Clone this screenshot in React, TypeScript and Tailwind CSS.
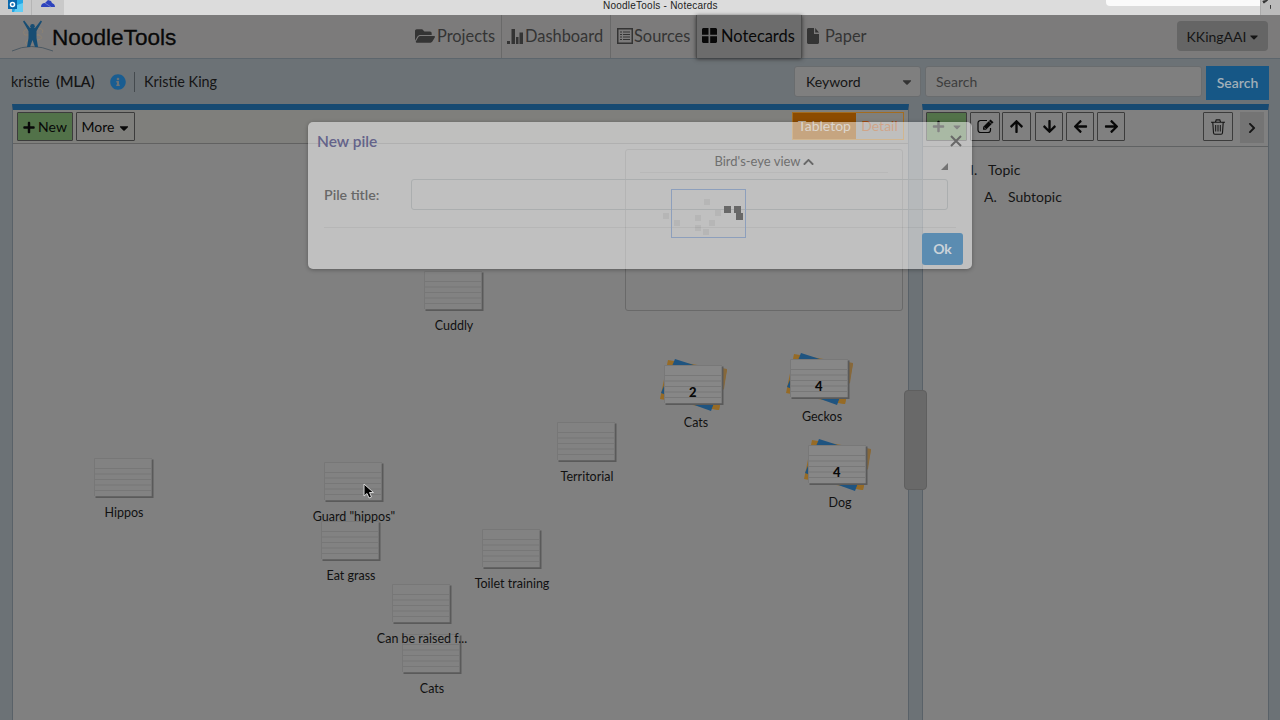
import React from "react";
import {
  FaArrowDown,
  FaArrowLeft,
  FaArrowRight,
  FaArrowUp,
  FaCaretDown,
  FaChevronRight,
  FaChevronUp,
  FaFolderOpen,
  FaInfoCircle,
  FaPlus,
} from "react-icons/fa";

type CardItem = { title: string; x: number; y: number; count?: number };

const cards: CardItem[] = [
  { title: "Cuddly", x: 424, y: 272 },
  { title: "Territorial", x: 557, y: 423 },
  { title: "Hippos", x: 94, y: 459 },
  { title: 'Guard "hippos"', x: 324, y: 463 },
  { title: "Eat grass", x: 321, y: 522 },
  { title: "Toilet training", x: 482, y: 530 },
  { title: "Can be raised f...", x: 392, y: 585 },
  { title: "Cats", x: 402, y: 635 },
];

const piles: CardItem[] = [
  { title: "Cats", x: 664, y: 366, count: 2 },
  { title: "Geckos", x: 790, y: 360, count: 4 },
  { title: "Dog", x: 808, y: 446, count: 4 },
];

const mapDots = [
  [704, 199], [663, 213], [674, 220], [695, 215], [695, 225], [715, 210], [709, 220], [703, 229],
];

function Logo() {
  return (
    <svg viewBox="0 0 44 34" className="h-[34px] w-[44px] shrink-0" fill="none">
      <path d="M1 31Q20 22 42 31" stroke="#4c5963" strokeWidth="1" />
      <path d="M17 9q-7 2-3 6h14q6 3-1 5H17q-6 3 1 6M27 8q7 1 4 5M28 15h-8" stroke="#8f8270" strokeWidth=".9" />
      <circle cx="21.500" cy="6.200" r="2.300" fill="#174d73" />
      <path d="M12 1.500l1.200-1L19 8h5l5.800-7.500 1.200 1L25.500 11v7l1.500 9h-3l-2.500-7-2.500 7h-3l1.500-9v-7z" fill="#174d73" />
    </svg>
  );
}

function BarsIcon() {
  return (
    <svg viewBox="0 0 16 16" className="h-4 w-4" fill="currentColor">
      <path d="M0 13h3v3H0zM4.500 1h3.500v15H4.500zM9 9h2.500v7H9zM12.500 4.500H16V16h-3.500z" />
    </svg>
  );
}

function ListIcon() {
  return (
    <svg viewBox="0 0 16 16" className="h-4 w-4" fill="none" stroke="currentColor">
      <path d="M.75.75h14.5v14.5H.75z" strokeWidth="1.5" />
      <path d="M3 4h2M6 4h7M3 6.5h2M6 6.5h7M3 9h2M6 9h7M3 11.5h2M6 11.5h7" />
    </svg>
  );
}

function GridIcon() {
  return (
    <svg viewBox="0 0 15 15" className="h-[15px] w-[15px]" fill="currentColor">
      <path d="M1 0h5.5v6.7H0V1zM8.2 0H14l1 1v5.7H8.2zM0 8.3h6.5V15H1l-1-1zM8.2 8.3H15V14l-1 1H8.2z" />
    </svg>
  );
}

function FileIcon() {
  return (
    <svg viewBox="0 0 12 16" className="h-4 w-3" fill="currentColor">
      <path d="M1 0h6v6h5v9l-1 1H1l-1-1V1zM8.2 0L12 4.4H8.2z" />
    </svg>
  );
}

function EditIcon() {
  return (
    <svg viewBox="0 0 17 15" className="h-[15px] w-[17px]" fill="none" stroke="#080808">
      <path d="M10 1.5H3.5a2.5 2.5 0 0 0-2.5 2.5v7a2.5 2.5 0 0 0 2.500 2.500H11a2.500 2.500 0 0 0 2.500-2.500V9" strokeWidth="1.2" />
      <path d="M6 10.800V8l7.500-7.500 3 2.800L9 10.800z" fill="#080808" stroke="none" />
      <path d="M7 8.300L8.600 10M12 2.300l2.500 2.500" stroke="#808080" strokeWidth=".7" />
    </svg>
  );
}

function TrashIcon() {
  return (
    <svg viewBox="0 0 14 16" className="h-4 w-[14px]" fill="none" stroke="#141414">
      <path d="M0 3.300h14M4.500 3L5.200.9h3.600L9.500 3M1.800 3.500l.7 10.300q.1 1.400 1.400 1.400h6.200q1.300 0 1.400-1.400l.7-10.300" strokeWidth="1.1" />
      <path d="M4.700 6v6.500M7 6v6.500M9.300 6v6.500" />
    </svg>
  );
}

function CardFace({ stacked }: { stacked?: boolean }) {
  return (
    <svg viewBox="0 0 72 56" className="absolute -left-1.5 -top-[9px] h-14 w-[72px]" fill="none">
      {stacked && (
        <>
          <path d="M10 3l59 10-8 40-59-11z" fill="#966b26" />
          <path d="M17 2l50 16-14 36-50-18z" fill="#1f5480" />
          <path d="M64 11l5 1-3 20-2 1z" fill="#86683b" />
          <path d="M56 47h6l-1 6-7-1z" fill="#966b26" />
        </>
      )}
      <path d="M7.500 9.500H65.500V48H7.500z" fill="#5a5a5a" />
      <path d="M6 8h57.700v38.300H6z" fill={stacked ? "#878787" : "#828282"} />
      <path d="M6.500 46V8.500H64" stroke="#757575" strokeWidth=".8" />
      <path d="M7 18.500h56M7 24h56M7 29.500h56M7 35h56M7 40.500h56" stroke="#757575" strokeWidth=".8" />
    </svg>
  );
}

function Card({ item }: { item: CardItem }) {
  const stacked = item.count !== undefined;
  return (
    <div className="absolute flex h-[61px] w-[60px] flex-col items-center" style={{ left: item.x, top: item.y }}>
      <CardFace stacked={stacked} />
      {stacked && (
        <span className="absolute left-[25px] top-[18px] text-[13px] font-black leading-4 text-[#090909]">{item.count}</span>
      )}
      <span
        className={
          "relative z-10 whitespace-nowrap text-center text-[12.5px] leading-4 text-[#111] " +
          (stacked ? "ml-1 mt-[49px]" : "mt-[46px]")
        }
      >
        {item.title}
      </span>
    </div>
  );
}

function NavItem({ icon, label, className }: { icon: React.ReactNode; label: string; className: string }) {
  return (
    <a className={"flex h-full items-center whitespace-nowrap pb-0.5 text-[16.4px] leading-5 " + className}>
      {icon}
      <span>{label}</span>
    </a>
  );
}

function ToolButton({ children, className }: { children: React.ReactNode; className: string }) {
  return (
    <button className={"flex h-[29px] shrink-0 items-center justify-center rounded-[1px] border border-[#3c3c3c] text-[#080808] " + className}>
      {children}
    </button>
  );
}

function Dialog() {
  return (
    <div className="absolute left-[308px] top-[122px] z-30 flex h-[147px] w-[664px] flex-col rounded-[5px] bg-white/50 shadow-[0_1px_4px_rgba(0,0,0,0.3)]">
      <div className="flex h-10 items-start justify-between pl-[9px] pr-2.5 pt-[9px]">
        <h2 className="text-[15.5px] font-semibold leading-5 text-[#64638a]">New pile</h2>
        <svg viewBox="0 0 12 12" className="mt-1 h-3 w-3" stroke="#686868" strokeWidth="2">
          <path d="M1 1l10 10M11 1L1 11" />
        </svg>
      </div>
      <div className="mx-4 flex h-[66px] items-center border-b border-black/5">
        <label className="w-[87px] text-[14.2px] font-semibold leading-5 text-[#686868]">Pile title:</label>
        <div className="h-[31px] w-[537px] rounded-[3px] border border-[#abaeaf]" />
      </div>
      <div className="flex justify-end pr-[9px] pt-[5px]">
        <button className="h-8 w-[41px] rounded-[3px] bg-[#5b8cb1] text-sm font-bold text-[#cbd3d9]">Ok</button>
      </div>
    </div>
  );
}

export default function App() {
  return (
    <div className="relative flex h-[720px] w-[1280px] flex-col overflow-hidden bg-[#6c7276] font-[family-name:Lato,sans-serif] text-[#151515]">
      {/* Browser strip */}
      <div className="relative flex h-[15px] shrink-0 justify-between bg-[#dcdcdc]">
        <div className="flex h-full w-16 overflow-hidden bg-[#c9c9c9]">
          <div className="flex w-8 justify-center border-r border-[#b5b5b5]">
            <svg viewBox="0 0 15 12" className="h-3 w-[15px]">
              <path d="M4 0h11v12H4z" fill="#25a7e5" />
              <path d="M9 5l6-2v9H6z" fill="#61cdf4" />
              <path d="M0 0h9v9H0z" fill="#0867ad" />
              <circle cx="4.500" cy="4.500" r="2" fill="none" stroke="#fff" strokeWidth="1.500" />
            </svg>
          </div>
          <svg viewBox="0 0 14 8" className="ml-[9px] h-2 w-3.5">
            <path d="M0 7q0-4 4-4l3-3 3 1 1 2q3 1 3 4z" fill="#2d43bd" />
            <path d="M4 3l6 4" stroke="#6876d1" />
          </svg>
        </div>
        <span className="absolute left-[603px] top-0 whitespace-nowrap font-[family-name:Liberation_Sans,sans-serif] text-[10px] leading-[11px] tracking-[0.23px] text-[#222]">
          NoodleTools - Notecards
        </span>
        <div className="flex h-full">
          <div className="h-1.5 w-[154px] rounded-bl bg-[#fafafa]" />
          <div className="flex h-full w-5 border-l border-[#aaa] bg-[#bbb]">
            <svg viewBox="0 0 20 10" className="h-2.5 w-5"><path d="M2 1l5-1-4 3zM10 5v4" fill="#333" stroke="#333" /></svg>
          </div>
        </div>
      </div>

      {/* Main navigation */}
      <header className="relative flex h-11 shrink-0 border-b border-[#5d666d] bg-[#7c7b7b]">
        <div className="flex w-[410px] items-center pl-[11px]">
          <Logo />
          <span className="-ml-1 mt-0.5 whitespace-nowrap pl-px font-[family-name:Liberation_Sans,sans-serif] text-[22.6px] leading-6 text-[#090909] [-webkit-text-stroke:0.3px_#090909]">
            NoodleTools
          </span>
        </div>
        <nav className="flex text-[#343434]">
          <NavItem icon={<FaFolderOpen className="h-[18px] w-5" />} label="Projects" className="w-[92px] gap-[2px] border-r border-[#696969] pl-[5px]" />
          <NavItem icon={<BarsIcon />} label="Dashboard" className="w-[109px] gap-[2px] border-r border-[#696969] pl-[5px]" />
          <NavItem icon={<ListIcon />} label="Sources" className="w-[85px] gap-[1px] pl-1.5" />
          <NavItem icon={<GridIcon />} label="Notecards" className="w-[106px] gap-1 border-x border-[#4d4d4d] bg-[#6c6c6c] pl-[5px] text-[#080808] shadow-[0_1px_4px_#333]" />
          <NavItem icon={<FileIcon />} label="Paper" className="gap-1.5 pl-[5px]" />
        </nav>
        <button className="ml-auto mr-3 mt-1.5 flex h-[30px] w-[91px] items-center justify-center gap-1 rounded bg-[#656565] pt-0.5 text-sm">
          KKingAAI <FaCaretDown className="h-3.5 w-2" />
        </button>
      </header>

      <div className="flex h-[45px] shrink-0 items-start pl-[11px] pr-3">
        <div className="flex h-[46px] items-center whitespace-nowrap text-[14.4px] leading-5">
          <span className="w-[45px]">kristie</span>
          <b className="w-[54px] font-semibold">(MLA)</b>
          <FaInfoCircle className="h-4 w-4 text-[#195d91]" />
          <div className="ml-2 mr-[9px] h-5 w-px bg-[#444a4e]" />
          <span>Kristie King</span>
        </div>
        <div className="-mr-px ml-auto flex pt-[7px]">
          <div className="flex h-[31px] w-[127px] items-center justify-between rounded-[3px] border border-[#696c6e] bg-[#7f7f7f] pl-[11px] pr-2 text-sm">
            Keyword <FaCaretDown className="h-3.5 w-2.5 text-[#333]" />
          </div>
          <div className="ml-1 flex h-[31px] w-[277px] items-center rounded-[3px] border border-[#696c6e] bg-[#7f7f7f] pl-2.5 text-sm text-[#3d3d3d]">Search</div>
          <button className="ml-1 h-[34px] w-[63px] bg-[#165786] text-sm font-semibold text-[#a1afb8]">Search</button>
        </div>
      </div>

      {/* Tabletop and outline */}
      <main className="flex min-h-0 flex-1 gap-[13px] pl-3 pr-[11px]">
        <section className="flex w-[897px] flex-col border-x border-t-[6px] border-x-[#596168] border-t-[#174a72] bg-[#808080]">
          <div className="flex h-[34px] shrink-0 border-b border-[#616161] bg-[#7f7f7c] pl-1 pt-0.5">
            <ToolButton className="w-14 gap-[3px] bg-[#527249] pt-px text-sm">
              <FaPlus className="h-[13px] w-3" /> New
            </ToolButton>
            <ToolButton className="ml-[3px] w-[59px] gap-[5px] pt-px text-sm">
              More <FaCaretDown className="mt-0.5 h-3.5 w-2.5" />
            </ToolButton>
            <div className="ml-auto mr-1 flex h-[28px] border border-[#a36c20] text-sm">
              <button className="w-[63px] bg-[#8c4b00] text-[#b8ac9e]">Tabletop</button>
              <button className="w-[47px] text-[#a04a10]">Detail</button>
            </div>
          </div>
          <div className="ml-auto mr-[5px] mt-[5px] flex h-[162px] w-[278px] shrink-0 flex-col rounded-[3px] border border-[#696969] px-[14px]">
            <div className="flex h-[23px] items-center justify-center border-b border-[#707070] pt-0.5">
              <span className="relative z-40 flex items-center gap-0.5 text-[13px] text-[#6f6f6f]">
                Bird's-eye view <FaChevronUp className="h-3 w-[11px] text-[#686868]" />
              </span>
            </div>
            <div className="relative z-40 ml-[31px] mt-[16px] h-[49px] w-[75px] border border-[#8d9fbc]" />
          </div>
        </section>
        <section className="flex w-[347px] flex-col border-x border-t-[6px] border-x-[#596168] border-t-[#174a72] bg-[#808080]">
          <div className="flex h-[37px] shrink-0 border-b border-[#606263] pl-[3px] pt-0.5">
            <ToolButton className="w-[41px] gap-2 bg-[#527249]">
              <FaPlus className="h-[13px] w-[13px]" /><FaCaretDown className="h-3 w-2" />
            </ToolButton>
            <ToolButton className="ml-[3px] w-[30px]"><EditIcon /></ToolButton>
            <ToolButton className="ml-[2px] w-[29px]"><FaArrowUp className="h-[15px] w-[15px]" /></ToolButton>
            <ToolButton className="ml-1 w-[28px]"><FaArrowDown className="h-[15px] w-[15px]" /></ToolButton>
            <ToolButton className="ml-[3px] w-[28px]"><FaArrowLeft className="h-[15px] w-[15px]" /></ToolButton>
            <ToolButton className="ml-[3px] w-[28px]"><FaArrowRight className="h-[15px] w-[15px]" /></ToolButton>
            <ToolButton className="ml-auto w-[30px]"><TrashIcon /></ToolButton>
            <button className="ml-[7px] mr-1 flex h-[31px] w-6 items-center justify-center bg-[#747474]"><FaChevronRight className="h-3 w-2" /></button>
          </div>
          <div className="flex flex-col text-sm leading-5 text-[#151515]">
            <div className="flex pl-[47px] pt-[13px]"><span className="w-[18px]">I.</span><span>Topic</span></div>
            <div className="flex pl-[61px] pt-[7px]"><span className="w-[24px]">A.</span><span>Subtopic</span></div>
          </div>
        </section>
      </main>

      {cards.map((card) => <Card key={card.title} item={card} />)}
      {piles.map((pile) => <Card key={pile.title} item={pile} />)}

      {/* Bird's-eye markers */}
      {mapDots.map(([x, y]) => (
        <i key={x + "-" + y} className="absolute h-1.5 w-1.5 bg-[#6c6c6c]" style={{ left: x, top: y }} />
      ))}

      {/* Splitter grip */}
      <div className="absolute left-[904px] top-[390px] h-[100px] w-[23px] rounded-[4px] border border-[#5f5f5f] bg-[#696969]" />

      <Dialog />

      <i className="absolute left-[724px] top-[206px] z-40 h-[7px] w-[7px] bg-[#686868]" />
      <i className="absolute left-[734px] top-[206px] z-40 h-[7px] w-[7px] bg-[#686868]" />
      <i className="absolute left-[736px] top-[213px] z-40 h-[7px] w-[7px] bg-[#686868]" />
      <svg viewBox="0 0 7 7" className="absolute left-[941px] top-[163px] z-40 h-[7px] w-[7px]"><path d="M7 0v7H0z" fill="#737373" /></svg>
      <svg viewBox="0 0 12 17" className="absolute left-[363px] top-[483px] z-40 h-[17px] w-3">
        <path d="M1 1v12l3-2.500 2 4.500 2.500-1-2-4.500h4z" fill="#000" stroke="#d7d7d7" />
      </svg>
    </div>
  );
}
